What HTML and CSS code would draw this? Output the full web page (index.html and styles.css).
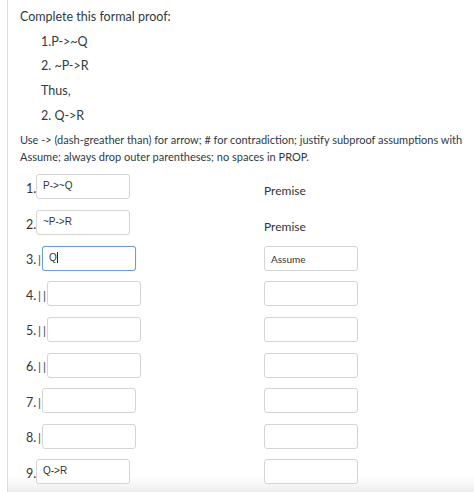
FILE: index.html
```html
<!DOCTYPE html>
<html>
<head>
<meta charset="utf-8">
<link rel="stylesheet" href="styles.css">
</head>
<body>
<div class="shade"></div>
<div class="page">
  <p class="line">Complete this formal proof:</p>
  <p class="line indent">1.P-&gt;~Q</p>
  <p class="line indent">2. ~P-&gt;R</p>
  <p class="line indent">Thus,</p>
  <p class="line indent">2. Q-&gt;R</p>
  <p class="instr">Use -&gt; (dash-greather than) for arrow; # for contradiction; justify subproof assumptions with<br>Assume; always drop outer parentheses; no spaces in PROP.</p>
  <div class="rows">
    <div class="left"><span class="num">1.</span><div class="box">P-&gt;~Q</div></div>
    <div class="right"><span class="just">Premise</span></div>

    <div class="left"><span class="num">2.</span><div class="box">~P-&gt;R</div></div>
    <div class="right"><span class="just">Premise</span></div>

    <div class="left"><span class="num">3.</span><span class="bar">|</span><div class="box focus">Q<span class="caret"></span></div></div>
    <div class="right"><div class="box jbox">Assume</div></div>

    <div class="left"><span class="num">4.</span><span class="bar">|</span><span class="bar">|</span><div class="box"></div></div>
    <div class="right"><div class="box jbox"></div></div>

    <div class="left"><span class="num">5.</span><span class="bar">|</span><span class="bar">|</span><div class="box"></div></div>
    <div class="right"><div class="box jbox"></div></div>

    <div class="left"><span class="num">6.</span><span class="bar">|</span><span class="bar">|</span><div class="box"></div></div>
    <div class="right"><div class="box jbox"></div></div>

    <div class="left"><span class="num">7.</span><span class="bar">|</span><div class="box"></div></div>
    <div class="right"><div class="box jbox"></div></div>

    <div class="left"><span class="num">8.</span><span class="bar">|</span><div class="box"></div></div>
    <div class="right"><div class="box jbox"></div></div>

    <div class="left"><span class="num">9.</span><div class="box">Q-&gt;R</div></div>
    <div class="right"><div class="box jbox"></div></div>
  </div>
</div>
</body>
</html>
```

FILE: styles.css
```css
html, body {
  margin: 0;
  padding: 0;
  background: #fff;
}
body {
  width: 474px;
  height: 492px;
  overflow: hidden;
  position: relative;
  font-family: Lato, "Open Sans", sans-serif;
  color: #2d3b45;
}
.page {
  position: relative;
  z-index: 1;
  margin-left: 7px;
  border-left: 1px solid #dedede;
  padding: 8px 0 0 12px;
  height: 492px;
  box-sizing: border-box;
}
.line {
  margin: 0 0 7.7px 0;
  font-size: 12.5px;
  line-height: 17px;
}
.indent {
  padding-left: 21px;
}
.instr {
  margin: 0;
  font-size: 11px;
  line-height: 17px;
  white-space: nowrap;
}
.rows {
  margin-top: 9px;
  margin-left: 6px;
  display: grid;
  grid-template-columns: 238px 110px;
  grid-auto-rows: 25px;
  row-gap: 10.625px;
}
.left {
  display: flex;
  align-items: center;
}
.num {
  font-size: 12.5px;
  width: 11px;
  padding-top: 3px;
  color: #333;
}
.num:last-of-type {
  width: 10px;
}
.bar {
  font-size: 12px;
  width: 5px;
  text-align: center;
  padding-top: 3px;
  color: #444;
}
.bar:first-of-type {
  margin-left: -1px;
  width: 6px;
}
.box {
  width: 94px;
  height: 25px;
  box-sizing: border-box;
  border: 1px solid #d4d4d4;
  border-radius: 3px;
  background: #fff;
  font-family: "Liberation Sans", Arial, sans-serif;
  font-size: 10px;
  color: #333;
  padding: 5px 0 0 6px;
  line-height: 12px;
}
.focus {
  border-color: #6a9ed3;
  box-shadow: 0 0 1px #9fc3e8;
}
.caret {
  display: inline-block;
  width: 1px;
  height: 11px;
  background: #222;
  vertical-align: -2px;
}
.right {
  display: flex;
  align-items: center;
}
.just {
  font-size: 12px;
  color: #333;
  padding-top: 7px;
}
.jbox {
  font-family: Lato, sans-serif;
  font-size: 10px;
  padding-top: 6px;
}
.shade {
  position: absolute;
  z-index: 0;
  left: 8px;
  right: 0;
  bottom: 0;
  height: 16px;
  background: linear-gradient(#ffffff, #eeeeee);
}
```
